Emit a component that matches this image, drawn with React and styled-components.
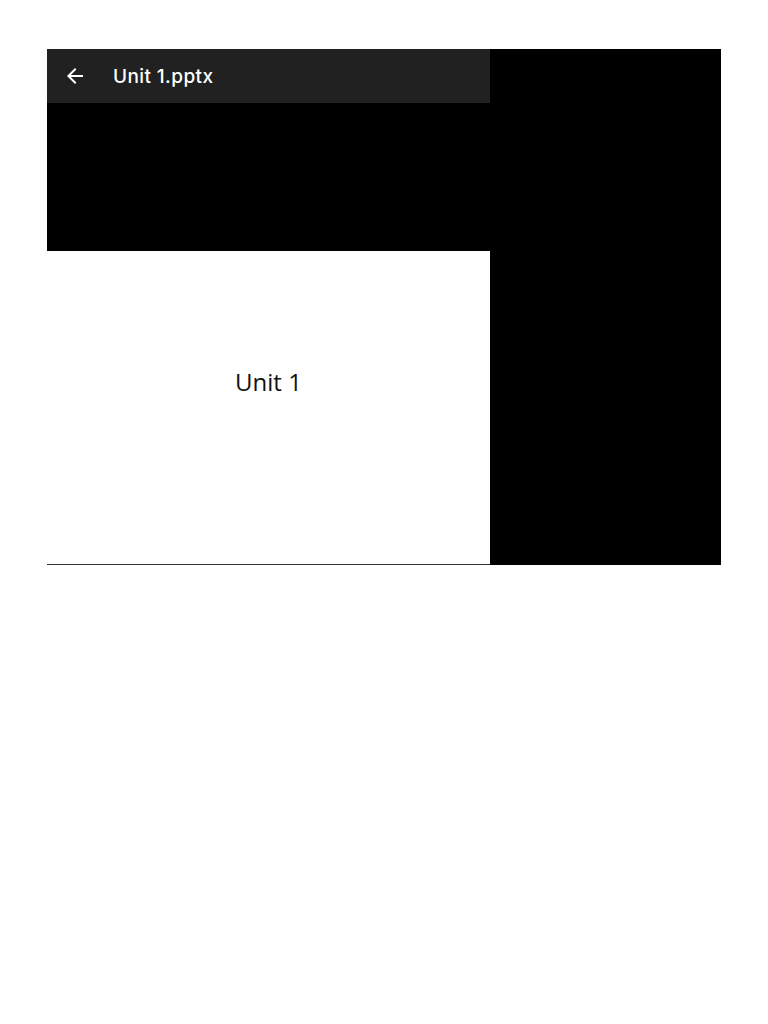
import React from 'react';
import styled, { createGlobalStyle } from 'styled-components';
import { MdArrowBack } from 'react-icons/md';

const GlobalStyle = createGlobalStyle`
  body {
    margin: 0;
    background-color: #fff;
    font-family: 'Open Sans', 'Liberation Sans', sans-serif;
  }
`;

const App = () => {
  return (
    <>
      <GlobalStyle />
      <Page>
        <Viewer>
          <LeftPane>
            <Header>
              <BackBtn>
                <MdArrowBack size={24} color={'#fff'} />
              </BackBtn>
              <FileName>Unit 1.pptx</FileName>
            </Header>
            <Gap />
            <Slide>
              <SlideTitle>Unit 1</SlideTitle>
            </Slide>
          </LeftPane>
        </Viewer>
      </Page>
    </>
  );
};

const Page = styled.div`
  padding: 49px 47px 0 47px;
`;

const Viewer = styled.div`
  background-color: #000;
  width: 674px;
  height: 516px;
  display: flex;
`;

const LeftPane = styled.div`
  width: 443px;
  display: flex;
  flex-direction: column;
`;

const Header = styled.div`
  background-color: #212121;
  height: 54px;
  display: flex;
  align-items: center;
  padding-left: 16px;
`;

const BackBtn = styled.div`
  width: 24px;
  height: 24px;
  display: flex;
  align-items: center;
  justify-content: center;
  cursor: pointer;
`;

const FileName = styled.span`
  color: #fff;
  font-family: Inter, 'Open Sans', sans-serif;
  font-size: 19px;
  font-weight: 500;
  letter-spacing: 0.4px;
  margin-left: 26px;
`;

const Gap = styled.div`
  flex: 1;
`;

const Slide = styled.div`
  background-color: #fff;
  height: 314px;
  border-bottom: 1px solid #333;
  display: flex;
  justify-content: center;
  padding-top: 115px;
  box-sizing: border-box;
`;

const SlideTitle = styled.p`
  margin: 0;
  color: #111;
  font-size: 24px;
  line-height: 32px;
  height: 32px;
`;

export default App;
